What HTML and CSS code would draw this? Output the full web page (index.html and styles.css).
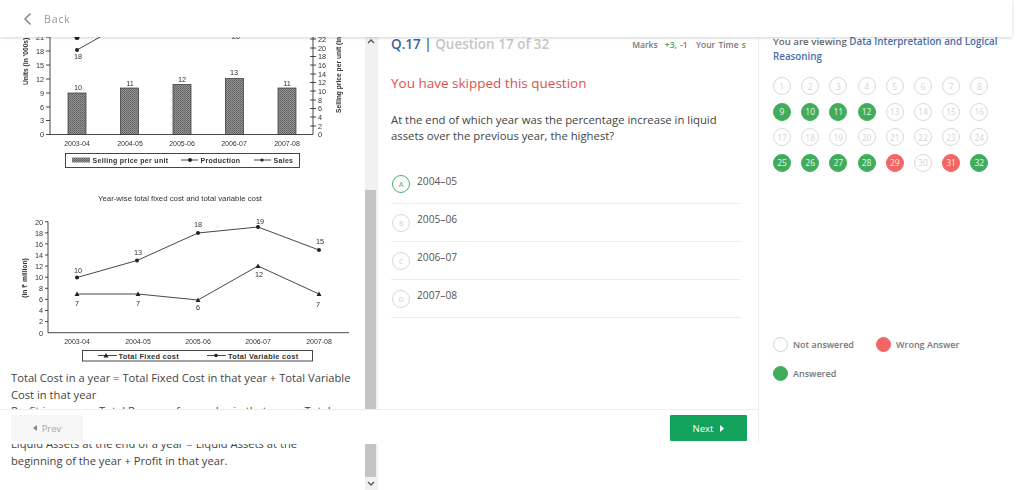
FILE: index.html
```html
<!DOCTYPE html>
<html lang="en">
<head>
<meta charset="utf-8">
<title>Question 17 of 32</title>
<link rel="stylesheet" href="styles.css">
</head>
<body>
<div class="page">
  <header class="topbar">
    <svg class="back-icon" width="9" height="14" viewBox="0 0 9 14"><path d="M7.5 1.5 2 7l5.5 5.5" fill="none" stroke="#8a8a8a" stroke-width="1.6"/></svg>
    <span class="back-label">Back</span>
  </header>
  <main class="main">
    <section class="passage">
      <div class="passage-body">
        <svg class="charts" width="365" height="328" viewBox="0 37 365 328">
          <defs>
            <pattern id="hatch" width="2" height="2" patternUnits="userSpaceOnUse">
              <rect width="2" height="2" fill="#929292"/>
              <rect width="1" height="1" fill="#606060"/>
              <rect x="1" y="1" width="1" height="1" fill="#707070"/>
            </pattern>
          </defs>
          <g class="ink">
            <path d="M50 37V134.500H313V37M46 37h4M46 51h4M46 65h4M46 79h4M46 93h4M46 107h4M46 120.500h4M46 134.500h4M310 39h6M310 48h6M310 56.500h6M310 65h6M310 74h6M310 82.500h6M310 91h6M310 100h6M310 108.500h6M310 117h6M310 126h6"/>
            <path d="M77 50 100 37"/>
          </g>
          <circle cx="77" cy="50" r="2" fill="#222"/>
          <circle cx="77" cy="37.500" r="2.500" fill="#222"/>
          <g fill="url(#hatch)" stroke="#333" stroke-width=".7">
            <rect x="68" y="93" width="18" height="41.500"/>
            <rect x="120.500" y="88" width="18" height="46.500"/>
            <rect x="173" y="84.500" width="18" height="50"/>
            <rect x="225.500" y="78.500" width="18" height="56"/>
            <rect x="278" y="88" width="18" height="46.500"/>
          </g>
          <g class="lbl end">
            <text x="44" y="39.500">21</text><text x="44" y="53.500">18</text><text x="44" y="67.500">15</text><text x="44" y="81.500">12</text><text x="44" y="95.500">9</text><text x="44" y="109.500">6</text><text x="44" y="123">3</text><text x="44" y="137">0</text>
          </g>
          <g class="lbl">
            <text x="318" y="41.500">22</text><text x="318" y="50.500">20</text><text x="318" y="59">18</text><text x="318" y="67.500">16</text><text x="318" y="76.500">14</text><text x="318" y="85">12</text><text x="318" y="93.500">10</text><text x="318" y="102.500">8</text><text x="318" y="111">6</text><text x="318" y="119.500">4</text><text x="318" y="128.500">2</text><text x="318" y="137">0</text>
          </g>
          <g class="lbl mid">
            <text x="78" y="58.500">18</text><text x="78" y="89.500">10</text><text x="130" y="85.500">11</text><text x="182" y="81.500">12</text><text x="234" y="74.500">13</text><text x="287" y="85.500">11</text><text x="236" y="39">20</text>
          </g>
          <g class="lbl mid small">
            <text x="77" y="145.500">2003-04</text><text x="130" y="145.500">2004-05</text><text x="182" y="145.500">2005-06</text><text x="234" y="145.500">2006-07</text><text x="287" y="145.500">2007-08</text>
          </g>
          <text class="axis-title" transform="translate(27.500 85) rotate(-90)">Units (in '000s)</text>
          <text class="axis-title" transform="translate(340.500 113) rotate(-90)">Selling price per unit (in</text>
          <rect class="legend-box" x="65.500" y="153.500" width="234" height="14"/>
          <rect x="72" y="157.500" width="18" height="5" fill="url(#hatch)"/>
          <text class="legend" x="92.500" y="163">Selling price per unit</text>
          <path class="ink" d="M181 160h17"/><circle cx="190" cy="160" r="2" fill="#222"/>
          <text class="legend" x="200.500" y="163">Production</text>
          <path class="ink" d="M254 160h17"/><circle cx="262" cy="160" r="1.600" fill="#222"/>
          <text class="legend" x="273.500" y="163">Sales</text>

          <text class="chart-title" x="180" y="201">Year-wise total fixed cost and total variable cost</text>
          <g class="ink">
            <path d="M48 221.700V332.700H349M45 221.700h3M45 232.800h3M45 243.900h3M45 255h3M45 266.100h3M45 277.200h3M45 288.300h3M45 299.400h3M45 310.500h3M45 321.600h3"/>
            <path d="M77 277.500 137 260.500 198 233 258 227 319 250"/>
            <path d="M77 294 138 294 198 300 258 266 319 294"/>
          </g>
          <g fill="#222">
            <circle cx="77" cy="277.500" r="2"/><circle cx="137" cy="260.500" r="2"/><circle cx="198" cy="233" r="2"/><circle cx="258" cy="227" r="2"/><circle cx="319" cy="250" r="2"/>
            <path d="M77 291.500l2.500 4.500h-5zM138 291.500l2.500 4.500h-5zM198 297.500l2.500 4.500h-5zM258 263.500l2.500 4.500h-5zM319 291.500l2.500 4.500h-5z"/>
          </g>
          <g class="lbl end">
            <text x="43" y="224.500">20</text><text x="43" y="235.500">18</text><text x="43" y="246.500">16</text><text x="43" y="257.500">14</text><text x="43" y="268.500">12</text><text x="43" y="279.500">10</text><text x="43" y="290.500">8</text><text x="43" y="302">6</text><text x="43" y="313">4</text><text x="43" y="324">2</text><text x="43" y="335.500">0</text>
          </g>
          <g class="lbl mid">
            <text x="78" y="272.500">10</text><text x="138" y="254.500">13</text><text x="198" y="227">18</text><text x="260" y="223.500">19</text><text x="320" y="243.500">15</text>
            <text x="77" y="305.500">7</text><text x="138" y="305.500">7</text><text x="198" y="309.500">6</text><text x="259" y="276.500">12</text><text x="318" y="306.500">7</text>
          </g>
          <g class="lbl mid small">
            <text x="77" y="343.500">2003-04</text><text x="138" y="343.500">2004-05</text><text x="198" y="343.500">2005-06</text><text x="258" y="343.500">2006-07</text><text x="319" y="343.500">2007-08</text>
          </g>
          <text class="axis-title" transform="translate(27 278) rotate(-90)" text-anchor="middle">(in ₹ million)</text>
          <rect class="legend-box" x="82.500" y="350.500" width="230" height="10.500"/>
          <path class="ink" d="M98 355.500h19"/><path d="M106 353l2.500 4.500h-5z" fill="#222"/>
          <text class="legend wide" x="118.500" y="358.500">Total Fixed cost</text>
          <path class="ink" d="M207 355.500h19"/><circle cx="216" cy="355.500" r="1.800" fill="#222"/>
          <text class="legend wide" x="228" y="358.500">Total Variable cost</text>
        </svg>
        <p class="passage-text">Total Cost in a year = Total Fixed Cost in that year + Total Variable Cost in that year<br>Profit in a year = Total Revenue from sales in that year + Total<br>Cost in that year.<br>Liquid Assets at the end of a year = Liquid Assets at the<br>beginning of the year + Profit in that year.</p>
      </div>
      <div class="scrollbar">
        <svg class="arrow-up" width="8" height="5" viewBox="0 0 8 5"><path d="M1 4 4 1l3 3" fill="none" stroke="#555" stroke-width="1.300"/></svg>
        <div class="thumb"></div>
        <svg class="arrow-down" width="8" height="5" viewBox="0 0 8 5"><path d="M1 1l3 3 3-3" fill="none" stroke="#555" stroke-width="1.300"/></svg>
      </div>
    </section>

    <section class="question">
      <div class="q-head">
        <h1 class="q-title"><span class="q-no">Q.17 |</span> <span class="q-of">Question 17 of 32</span></h1>
        <div class="q-meta"><span class="marks">Marks</span> <span class="plus">+3,</span> <span class="minus">-1</span> <span class="time">Your Time</span> <span class="plus">s</span></div>
      </div>
      <p class="skipped">You have skipped this question</p>
      <p class="q-text">At the end of which year was the percentage increase in liquid assets over the previous year, the highest?</p>
      <ul class="options">
        <li class="option"><span class="opt-mark correct">A</span><span>2004–05</span></li>
        <li class="option"><span class="opt-mark">B</span><span>2005–06</span></li>
        <li class="option"><span class="opt-mark">C</span><span>2006–07</span></li>
        <li class="option"><span class="opt-mark">D</span><span>2007–08</span></li>
      </ul>
    </section>

    <aside class="sidebar">
      <p class="viewing">You are viewing <span class="section-name">Data Interpretation and Logical Reasoning</span></p>
      <div class="grid">
        <span class="dot">1</span><span class="dot">2</span><span class="dot">3</span><span class="dot">4</span><span class="dot">5</span><span class="dot">6</span><span class="dot">7</span><span class="dot">8</span>
        <span class="dot ok">9</span><span class="dot ok">10</span><span class="dot ok">11</span><span class="dot ok">12</span><span class="dot">13</span><span class="dot">14</span><span class="dot">15</span><span class="dot">16</span>
        <span class="dot">17</span><span class="dot">18</span><span class="dot">19</span><span class="dot">20</span><span class="dot">21</span><span class="dot">22</span><span class="dot">23</span><span class="dot">24</span>
        <span class="dot ok">25</span><span class="dot ok">26</span><span class="dot ok">27</span><span class="dot ok">28</span><span class="dot bad">29</span><span class="dot">30</span><span class="dot bad">31</span><span class="dot ok">32</span>
      </div>
      <div class="key">
        <span class="key-item key-wide"><i class="swatch"></i>Not answered</span>
        <span class="key-item"><i class="swatch bad"></i>Wrong Answer</span>
        <span class="key-item key-wide"><i class="swatch ok"></i>Answered</span>
      </div>
    </aside>

    <div class="footer-bar">
      <button class="btn prev"><svg width="4" height="6" viewBox="0 0 4 6"><path d="M4 0v6L0 3z" fill="#888"/></svg>Prev</button>
      <button class="btn next">Next<svg width="4" height="7" viewBox="0 0 4 7"><path d="M0 0v7l4-3.500z" fill="#fff"/></svg></button>
    </div>
  </main>
</div>
</body>
</html>
```
FILE: styles.css
```css
* { box-sizing: border-box; }
html, body { margin: 0; padding: 0; background: #fff; }
body { font-family: "Open Sans", "Liberation Sans", sans-serif; color: #444; overflow: hidden; height: 490px; }
.page { width: 1012px; height: 490px; display: flex; flex-direction: column; }

.topbar { height: 37px; flex: none; display: flex; align-items: center; padding: 0 0 0 23px; gap: 12px; background: #fff; box-shadow: 0 1px 3px rgba(0,0,0,.18); position: relative; z-index: 3; }
.back-label { color: #9a9a9a; font-size: 10.500px; letter-spacing: .9px; }

.main { flex: 1; display: flex; position: relative; min-height: 0; }

.passage { width: 380px; flex: none; display: flex; overflow: hidden; }
.passage-body { width: 365px; flex: none; overflow: hidden; }
.charts { display: block; filter: blur(.35px); }
.ink { fill: none; stroke: #333; stroke-width: .9; }
.lbl { font-family: "Liberation Sans", sans-serif; font-size: 7.300px; fill: #333; }
.lbl.end { text-anchor: end; }
.lbl.mid { text-anchor: middle; }
.lbl.small { font-size: 7px; }
.axis-title { font-family: "Liberation Sans", sans-serif; font-size: 6.700px; fill: #333; font-weight: 700; }
.legend-box { fill: #fff; stroke: #333; stroke-width: .9; }
.legend { font-family: "Liberation Sans", sans-serif; font-size: 7px; font-weight: 700; fill: #333; letter-spacing: .3px; }
.legend.wide { font-size: 7.400px; }
.chart-title { font-family: "Liberation Sans", sans-serif; font-size: 7.800px; fill: #333; text-anchor: middle; }
.passage-text { margin: 5px 0 0; padding: 0 5px 0 11px; font-size: 11.200px; line-height: 16.600px; color: #444; }

.scrollbar { width: 13px; flex: none; background: #f1f1f1; position: relative; display: flex; flex-direction: column; align-items: center; padding-top: 2px; }
.arrow-up { flex: none; margin-right: 2px; }
.thumb { position: absolute; left: 0; top: 153px; width: 11px; height: 287px; background: #c4c4c4; }
.arrow-down { position: absolute; left: 2px; top: 444px; }

.question { width: 379px; flex: none; border-right: 1px solid #f0f0f0; height: 406px; padding: 0 17px 0 11px; }
.q-head { display: flex; justify-content: space-between; align-items: center; height: 15px; }
.q-title { margin: 0; font-size: 13.500px; line-height: 15px; font-weight: 600; }
.q-no { color: #3d5f9e; }
.q-of { color: #c6c6c6; }
.q-meta { font-size: 8.500px; color: #777; white-space: nowrap; font-weight: 600; word-spacing: 1px; margin-right: -5px; }
.marks { margin-right: 4px; }
.plus { color: #49a56b; }
.minus { color: #d9534f; }
.time { margin-left: 5px; }
.skipped { margin: 22px 0 0; font-size: 13.500px; line-height: 19px; color: #d9534f; }
.q-text { margin: 19px 0 0; font-size: 11.300px; line-height: 16px; color: #444; width: 340px; }
.options { list-style: none; margin: 21px 0 0; padding: 0; width: 350px; }
.option { height: 38px; display: flex; gap: 7px; padding-top: 8px; padding-left: 1px; border-bottom: 1px solid #ececec; font-size: 10.200px; line-height: 15px; color: #555; }
.option:first-child { height: 39px; padding-top: 9px; }
.opt-mark { width: 18px; height: 18px; margin-top: 2px; flex: none; border: 1.500px solid #d8d8d8; border-radius: 50%; display: flex; align-items: center; justify-content: center; font-size: 6.500px; color: #ccc; }
.opt-mark.correct { border-color: #4caf6c; color: #4caf6c; font-size: 7.500px; margin-top: 1px; }

.sidebar { flex: 1; padding: 0 0 0 14px; }
.viewing { margin: -3px 0 0; font-size: 9.700px; line-height: 15px; color: #666; font-weight: 600; }
.section-name { color: #4a6ea9; font-size: 9.800px; }
.grid { display: grid; grid-template-columns: repeat(8, 18px); column-gap: 10.200px; row-gap: 7.500px; margin-top: 13px; }
.dot { width: 18px; height: 18px; border-radius: 50%; border: 1.500px solid #d9d9d9; display: flex; align-items: center; justify-content: center; font-size: 8.500px; color: #d4d4d4; }
.dot.ok { background: #41ad5c; border-color: #41ad5c; color: #e8f5ec; }
.dot.bad { background: #f56565; border-color: #f56565; color: #fde7e7; }
.key { display: flex; flex-wrap: wrap; column-gap: 22px; row-gap: 14px; margin-top: 165px; }
.key-item { display: flex; align-items: center; gap: 5px; height: 15px; font-size: 9px; font-weight: 600; color: #777; }
.key-wide { width: 81px; }
.key-item:last-child { width: 100%; }
.swatch { width: 15px; height: 15px; border-radius: 50%; border: 1.500px solid #d0d0d0; flex: none; }
.swatch.ok { background: #41ad5c; border-color: #41ad5c; }
.swatch.bad { background: #f56565; border-color: #f56565; }

.footer-bar { position: absolute; left: 0; top: 372px; width: 758px; height: 35px; background: #fff; border-top: 1px solid #eee; display: flex; justify-content: space-between; padding: 5px 11px 0; align-items: flex-start; z-index: 2; }
.btn { height: 26px; border: 0; font-family: inherit; font-size: 9.500px; display: flex; align-items: center; justify-content: center; gap: 5px; border-radius: 1px; padding: 0; }
.prev { width: 72px; background: #f6f6f6; color: #aaa; }
.next { width: 77px; background: #13a25c; color: #fff; gap: 7px; }
```
